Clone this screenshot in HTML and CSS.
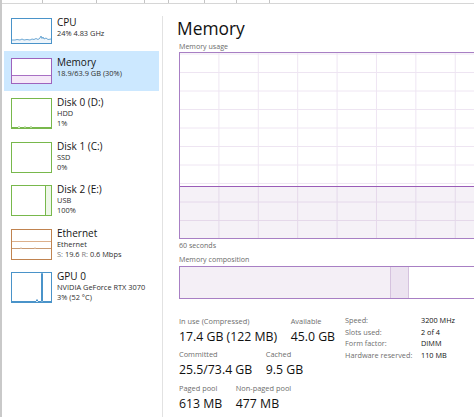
FILE: index.html
```html
<!DOCTYPE html>
<html lang="en">
<head>
<meta charset="utf-8">
<title>Task Manager - Memory</title>
<link rel="stylesheet" href="styles.css">
</head>
<body>
<div class="window">
  <div class="tabs">
    <span class="tab w41"></span>
    <span class="tab w54"></span>
    <span class="tab w48"></span>
    <span class="tab w24"></span>
    <span class="tab w36"></span>
    <span class="tab w32"></span>
    <span class="tab w33"></span>
  </div>
  <div class="content">
    <nav class="sidebar">
      <div class="item">
        <div class="thumb cpu">
          <svg width="39" height="24" viewBox="0 0 39 24"><polygon class="cpu-area" points="0,21 3,21 5,20.5 8,21 10,20 12,21 15,20.5 18,21 20,20 22,20.5 24,19.5 26,20.5 28,19 29,17 30,19.5 31,18 32,20 34,19 36,20.5 39,20 39,24 0,24"/><polyline class="cpu-line" points="0,21 3,21 5,20.5 8,21 10,20 12,21 15,20.5 18,21 20,20 22,20.5 24,19.5 26,20.5 28,19 29,17 30,19.5 31,18 32,20 34,19 36,20.5 39,20"/></svg>
        </div>
        <div class="info"><div class="name">CPU</div><div class="sub">24%  4.83 GHz</div></div>
      </div>
      <div class="item sel">
        <div class="thumb mem"><div class="mem-fill"></div></div>
        <div class="info"><div class="name">Memory</div><div class="sub">18.9/63.9 GB (30%)</div></div>
      </div>
      <div class="item three">
        <div class="thumb disk">
          <svg width="39" height="29" viewBox="0 0 39 29"><polyline class="disk-line" points="0,28.5 6,28.5 7,27.5 8,28.5 12,28.5 13,27.8 14,28.5 18,28.5 19,27.6 20,28.5 39,28.5"/></svg>
        </div>
        <div class="info"><div class="name">Disk 0 (D:)</div><div class="sub">HDD</div><div class="sub">1%</div></div>
      </div>
      <div class="item three">
        <div class="thumb disk"></div>
        <div class="info"><div class="name">Disk 1 (C:)</div><div class="sub">SSD</div><div class="sub">0%</div></div>
      </div>
      <div class="item three">
        <div class="thumb disk">
          <svg width="39" height="29" viewBox="0 0 39 29"><rect class="disk-area" x="33" y="0" width="6" height="29"/><line class="disk-line" x1="33.5" y1="0" x2="33.5" y2="29"/></svg>
        </div>
        <div class="info"><div class="name">Disk 2 (E:)</div><div class="sub">USB</div><div class="sub">100%</div></div>
      </div>
      <div class="item three">
        <div class="thumb eth">
          <svg width="39" height="29" viewBox="0 0 39 29"><line class="eth-a" x1="0" y1="11.5" x2="39" y2="11.5"/><polyline class="eth-b" points="0,18.5 8,18.5 9,18 10,18.5 22,18.5 23,18 24,18.5 39,18.5"/></svg>
        </div>
        <div class="info"><div class="name">Ethernet</div><div class="sub">Ethernet</div><div class="sub"><span class="dim">S:</span> 19.6 <span class="dim">R:</span> 0.6 Mbps</div></div>
      </div>
      <div class="item three">
        <div class="thumb gpu">
          <svg width="39" height="29" viewBox="0 0 39 29"><polyline class="gpu-line" points="0,28.5 24,28.5 25,26.5 26,28.5 29.5,28.5 29.5,0.5 30.5,0.5 30.5,28.5 39,28.5"/></svg>
        </div>
        <div class="info"><div class="name">GPU 0</div><div class="sub">NVIDIA GeForce RTX 3070</div><div class="sub">3%  (52 °C)</div></div>
      </div>
    </nav>
    <div class="sep"></div>
    <main class="panel">
      <h1 class="title">Memory</h1>
      <div class="cap cap-usage">Memory usage</div>
      <div class="graph">
        <div class="graph-space"></div>
        <div class="graph-fill"></div>
      </div>
      <div class="cap cap-secs">60 seconds</div>
      <div class="cap cap-comp">Memory composition</div>
      <div class="comp">
        <div class="seg inuse"></div>
        <div class="seg standby"></div>
        <div class="seg free"></div>
      </div>
      <div class="stats">
        <div class="stats-left">
          <div class="row">
            <div class="stat"><div class="label">In use (Compressed)</div><div class="value">17.4 GB (122 MB)</div></div>
            <div class="stat"><div class="label">Available</div><div class="value">45.0 GB</div></div>
          </div>
          <div class="row">
            <div class="stat"><div class="label">Committed</div><div class="value">25.5/73.4 GB</div></div>
            <div class="stat"><div class="label">Cached</div><div class="value">9.5 GB</div></div>
          </div>
          <div class="row">
            <div class="stat"><div class="label">Paged pool</div><div class="value">613 MB</div></div>
            <div class="stat"><div class="label">Non-paged pool</div><div class="value">477 MB</div></div>
          </div>
        </div>
        <dl class="stats-right">
          <dt>Speed:</dt><dd>3200 MHz</dd>
          <dt>Slots used:</dt><dd>2 of 4</dd>
          <dt>Form factor:</dt><dd>DIMM</dd>
          <dt>Hardware reserved:</dt><dd>110 MB</dd>
        </dl>
      </div>
    </main>
  </div>
</div>
</body>
</html>
```
FILE: styles.css
```css
* {
  box-sizing: border-box;
  margin: 0;
  padding: 0;
}

html, body {
  width: 474px;
  height: 417px;
  overflow: hidden;
  background: #ffffff;
}

body {
  font-family: "Open Sans", "Noto Sans", sans-serif;
  color: #111111;
}

.window {
  height: 417px;
  border-left: 2px solid #c9c9c9;
  display: flex;
  flex-direction: column;
}

/* tab strip (cut off at top) */
.tabs {
  height: 4px;
  flex: none;
  display: flex;
  border-bottom: 1px solid #d6d6d6;
}

.tab {
  height: 3px;
  border-right: 1px solid #c4c4c4;
}

.w41 { width: 41px; }
.w54 { width: 54px; }
.w48 { width: 48px; }
.w24 { width: 24px; }
.w36 { width: 36px; }
.w32 { width: 32px; }
.w33 { width: 33px; }

.content {
  flex: 1;
  min-height: 0;
  display: flex;
  overflow: hidden;
}

/* sidebar */
.sidebar {
  width: 160px;
  flex: none;
  padding-top: 7px;
}

.item {
  display: flex;
  align-items: flex-start;
  width: 155px;
  height: 40px;
  margin-left: 2px;
  padding: 5px 0 0 7px;
}

.item.three {
  height: 43.5px;
}

.item.sel {
  background: #cce8ff;
}

.thumb {
  width: 41px;
  height: 26px;
  margin-top: 2px;
  flex: none;
  border: 1px solid #999;
  background: #ffffff;
  overflow: hidden;
}

.three .thumb {
  height: 31px;
}

.thumb svg {
  display: block;
}

.thumb.cpu { border-color: #4a93c9; }
.thumb.gpu { border-color: #4a93c9; }
.thumb.disk { border-color: #78b84c; }
.thumb.eth { border-color: #c0834f; }

.thumb.mem {
  border-color: #9e63bd;
  display: flex;
  flex-direction: column;
  justify-content: flex-end;
}

.mem-fill {
  height: 8px;
  border-top: 1px solid #a870c4;
  background: #f5e9f8;
}

.cpu-area { fill: #eef5fb; }
.cpu-line { fill: none; stroke: #4a93c9; stroke-width: 0.8; }
.disk-line { fill: none; stroke: #78b84c; stroke-width: 1; }
.disk-area { fill: #eef7e8; }
.eth-a { stroke: #dcb08c; stroke-width: 1; }
.eth-b { fill: none; stroke: #c99a72; stroke-width: 1; }
.gpu-line { fill: none; stroke: #4a93c9; stroke-width: 1; }

.info {
  margin-left: 5px;
  white-space: nowrap;
}

.name {
  font-size: 10px;
  line-height: 12px;
  color: #141414;
}

.sub {
  font-size: 7.4px;
  line-height: 10px;
  color: #2e2e2e;
}

.dim {
  color: #7a7a7a;
}

.sep {
  width: 1px;
  flex: none;
  margin-top: 12px;
  background: #e2e2e2;
}

/* main panel */
.panel {
  width: 800px;
  flex: none;
  padding: 12.5px 0 0 16px;
}

.title {
  font-size: 17.4px;
  line-height: 22px;
  font-weight: 400;
  color: #111111;
  margin-left: -2px;
}

.cap {
  font-size: 7.1px;
  line-height: 10px;
  color: #6b6b6b;
}

.cap-usage { margin-top: 2.2px; }
.cap-secs { margin-top: 1.3px; }
.cap-comp { margin-top: 3.4px; }

.graph {
  margin-top: 1.5px;
  height: 187px;
  width: 790px;
  border: 1px solid #a87fc4;
  display: flex;
  flex-direction: column;
  background-image:
    linear-gradient(to right, transparent 38.4px, #eee5f2 38.4px),
    linear-gradient(to bottom, transparent 17.5px, #eee5f2 17.5px);
  background-size: 39.4px 100%, 100% 18.5px;
  background-position: 0 0, 0 1.5px;
}

.graph-space {
  flex: 1;
}

.graph-fill {
  height: 52px;
  border-top: 1px solid #9a5cb8;
  background: rgba(120, 60, 140, 0.07);
}

.comp {
  margin-top: 2.1px;
  height: 33.5px;
  width: 790px;
  border: 1px solid #a87fc4;
  display: flex;
}

.seg.inuse {
  width: 211px;
  background: #f4eff6;
  border-right: 1px solid #d5c2de;
}

.seg.standby {
  width: 18px;
  background: #ece3f0;
  border-right: 1px solid #d5c2de;
}

.seg.free {
  flex: 1;
}

/* stats */
.stats {
  margin-top: 14.6px;
  display: flex;
  align-items: flex-start;
}

.stats-left {
  width: 166px;
  flex: none;
}

.row {
  display: flex;
  gap: 13.5px;
}

.row + .row {
  margin-top: 2.3px;
}

.label {
  font-size: 7.4px;
  line-height: 14px;
  color: #6e6e6e;
  white-space: nowrap;
}

.value {
  font-size: 12.3px;
  line-height: 17px;
  color: #111111;
  white-space: nowrap;
}

.stats-right {
  margin-top: 1.3px;
  display: grid;
  grid-template-columns: 76px auto;
  font-size: 7.3px;
  line-height: 11.4px;
}

.stats-right dt {
  color: #6e6e6e;
  white-space: nowrap;
}

.stats-right dd {
  color: #111111;
  white-space: nowrap;
}
```
